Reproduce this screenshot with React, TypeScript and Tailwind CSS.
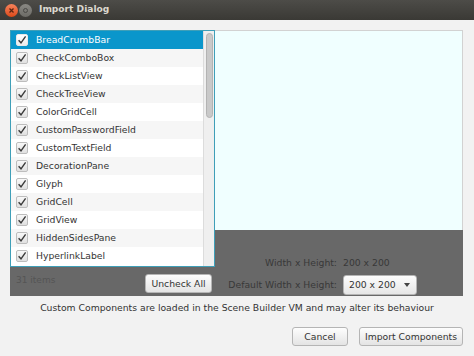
import React from 'react';

const items = [
  'BreadCrumbBar',
  'CheckComboBox',
  'CheckListView',
  'CheckTreeView',
  'ColorGridCell',
  'CustomPasswordField',
  'CustomTextField',
  'DecorationPane',
  'Glyph',
  'GridCell',
  'GridView',
  'HiddenSidesPane',
  'HyperlinkLabel',
];

// Checkbox of a list cell
const CheckBox: React.FC<{ selected: boolean }> = ({ selected }) => (
  <div
    className={
      'w-[12px] h-[12px] rounded-[2px] border flex items-center justify-center shrink-0 ' +
      (selected
        ? 'border-[#e8e8e8] bg-gradient-to-b from-white to-[#ececec]'
        : 'border-[#bdbdbd] bg-gradient-to-b from-[#f8f8f8] to-[#e0e0e0]')
    }
  >
    <svg width="10" height="10" viewBox="0 0 10 10">
      <path d="M1.6 5.2 L4 7.8 L8.6 1.4" fill="none" stroke="#3a3a3a" strokeWidth="1.4" />
    </svg>
  </div>
);

const Button: React.FC<{ label: string; className?: string }> = ({ label, className }) => (
  <div
    className={
      'h-[19px] flex items-center justify-center rounded-[3px] border border-[#b5b5b5] bg-gradient-to-b from-[#fdfdfd] to-[#e4e4e4] text-[#333] text-[9.25px] ' +
      (className ?? '')
    }
  >
    {label}
  </div>
);

export default function App() {
  return (
    <div className="w-[474px] h-[356px] bg-[#f2f2f2] flex flex-col font-['DejaVu_Sans',sans-serif] overflow-hidden">
      {/* title bar */}
      <div className="h-[20px] bg-gradient-to-b from-[#4d4c48] to-[#3a3935] flex items-center pl-[5px]">
        <div className="w-[13px] h-[13px] rounded-full bg-gradient-to-b from-[#f6825a] to-[#dd4814] flex items-center justify-center">
          <svg width="7" height="7" viewBox="0 0 7 7">
            <path d="M1.5 1.5 L5.5 5.5 M5.5 1.5 L1.5 5.5" stroke="#5a2410" strokeWidth="1.3" />
          </svg>
        </div>
        <div className="ml-[1px] w-[13px] h-[13px] rounded-full bg-gradient-to-b from-[#8a8984] to-[#6c6b66] flex items-center justify-center">
          <div className="w-[5px] h-[5px] rounded-full border border-[#4a4945]" />
        </div>
        <span className="ml-[7px] text-[9.1px] font-bold text-[#dcd8cf] leading-none">Import Dialog</span>
      </div>

      {/* main panel */}
      <div className="mt-[10px] ml-[10px] mr-[11px] h-[266px] bg-[#686868] flex">
        <div className="w-[205px] flex flex-col">
          <div className="h-[237px] border border-[#3f9fb8] bg-white flex overflow-hidden">
            <div className="flex-1 flex flex-col">
              {items.map((name, i) => (
                <div
                  key={name}
                  className={
                    'h-[18px] shrink-0 flex items-center pl-[5px] text-[9.25px] ' +
                    (i === 0 ? 'bg-[#0a96cb] text-white' : i % 2 === 1 ? 'bg-[#f6f6f6] text-[#333]' : 'bg-white text-[#333]')
                  }
                >
                  <CheckBox selected={i === 0} />
                  <span className="ml-[8px]">{name}</span>
                </div>
              ))}
            </div>
            <div className="w-[11px] bg-[#efefef] border-l border-[#dcdcdc] flex justify-center pt-[2px]">
              <div className="w-[7px] h-[85px] rounded-full bg-[#c9c9c9] border border-[#b3b3b3]" />
            </div>
          </div>
          <div className="flex-1 flex items-start justify-between pl-[6px] pr-[3px]">
            <span className="mt-[8px] text-[9px] leading-[11px] text-[#555]">31 items</span>
            <Button label="Uncheck All" className="mt-[7px] w-[67px]" />
          </div>
        </div>
        <div className="flex-1 flex flex-col">
          <div className="h-[200px] bg-[#f0ffff] border-t border-r border-[#d2d2d2]" />
          <div className="flex-1 flex flex-col justify-end pb-[1px] gap-[4px] text-[9.25px] text-[#383838]">
            <div className="grid grid-cols-2 h-[16px] items-center">
              <span className="text-right pr-[2px]">Width x Height:</span>
              <span className="pl-[4px]">200 x 200</span>
            </div>
            <div className="grid grid-cols-2 h-[20px] items-center">
              <span className="text-right pr-[2px]">Default Width x Height:</span>
              <div className="ml-[4px] w-[74px] h-[20px] rounded-[3px] border border-[#b5b5b5] bg-gradient-to-b from-[#fdfdfd] to-[#e6e6e6] flex items-center justify-between pl-[5px] pr-[6px] text-[#333]">
                <span>200 x 200</span>
                <svg width="6" height="4" viewBox="0 0 6 4">
                  <path d="M0 0 L6 0 L3 4 Z" fill="#444" />
                </svg>
              </div>
            </div>
          </div>
        </div>
      </div>

      {/* message */}
      <div className="mt-[6px] h-[12px] leading-[12px] text-center text-[9.25px] text-[#333]">
        Custom Components are loaded in the Scene Builder VM and may alter its behaviour
      </div>

      {/* buttons */}
      <div className="mt-[13px] flex justify-end gap-[11px] pr-[11px]">
        <Button label="Cancel" className="w-[56px]" />
        <Button label="Import Components" className="w-[104px]" />
      </div>
    </div>
  );
}
